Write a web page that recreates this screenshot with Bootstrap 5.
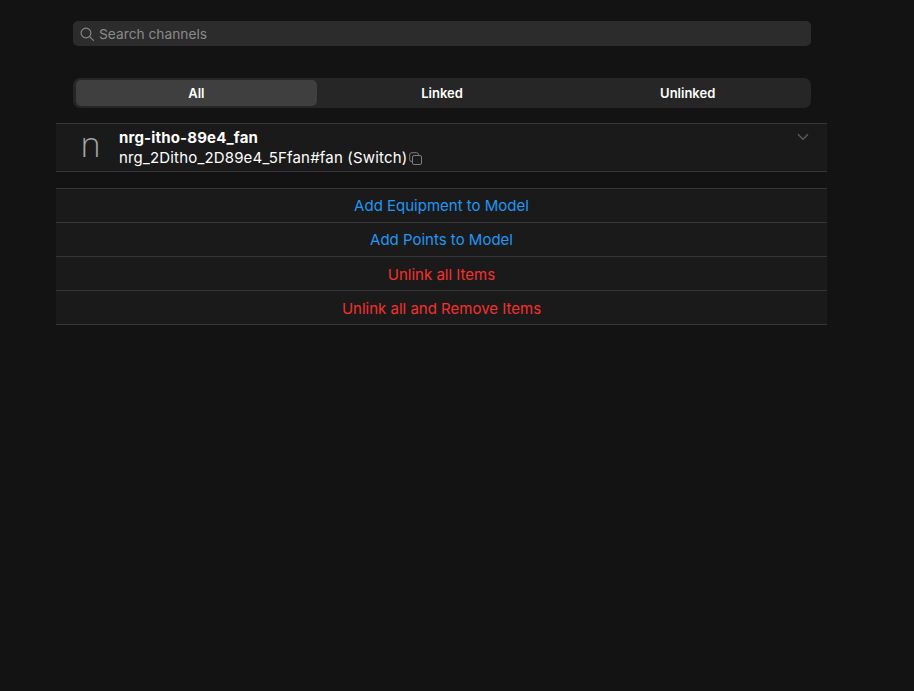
<!DOCTYPE html>
<html lang="en">
<head>
<meta charset="utf-8">
<title>Channels</title>
<link href="https://cdn.jsdelivr.net/npm/bootstrap@5.3.0/dist/css/bootstrap.min.css" rel="stylesheet">
<style>
html,body{height:100%}
body{background:#131313;color:#fff;font-family:Inter,"Liberation Sans",sans-serif;font-size:14px;margin:0}
.page-wrap{width:771px;margin-left:56px;padding-top:21px}
.inset-block{padding:0 16px 0 17px}
.search-box{height:25px;background:#2c2c2c;border-radius:5px;padding-left:7px;color:#8a8a8a;font-size:13.75px;gap:5px}
.search-box span{padding-top:1px}
.seg-box{height:30px;background:#262626;border-radius:7px;margin-top:32px;padding:2px 3px;gap:5px}
.seg-item{flex:1 1 0;font-size:13px;font-weight:600;border-radius:5px;display:flex;align-items:center;justify-content:center;color:#fff;height:26px;padding:1px 0 0}
.seg-item.on{background:#3f3f3f}
.row-list{background:#1a1a1a;border-top:1px solid #363636;border-bottom:1px solid #363636}
.chan-row{margin-top:15px;height:49px;position:relative}
.chan-letter{width:63px;padding-left:6px;text-align:center;font-size:34px;font-weight:300;color:#a5a5a5;line-height:1;padding-top:3px;font-family:"Open Sans",Inter,sans-serif}
.chan-title{font-size:15px;font-weight:700;letter-spacing:.17px;line-height:17px;padding-top:5px}
.chan-sub{font-size:15px;letter-spacing:.17px;line-height:17px;padding-top:3px;white-space:nowrap}
.chev-icon{position:absolute;right:18px;top:9px}
.copy-icon{vertical-align:-2px;margin-left:-3px}
.act-list{margin-top:16px}
.act-row{height:34px;display:flex;align-items:center;justify-content:center;font-size:15px;border-bottom:1px solid #363636;padding-top:2px}
.act-row:last-child{border-bottom:0;height:33px}
.act-blue{color:#2196f3}
.act-red{color:#f5302e;padding-top:4px}
</style>
</head>
<body>
<div class="page-wrap">
  <div class="inset-block">
    <div class="search-box d-flex align-items-center">
      <svg width="14" height="14" viewBox="0 0 14 14" fill="none" stroke="#8a8a8a" stroke-width="1.1"><circle cx="6" cy="6" r="4.9"/><path d="M9.6 9.6 13.4 13.4" stroke-linecap="round"/></svg>
      <span>Search channels</span>
    </div>
    <div class="seg-box d-flex">
      <div class="seg-item on">All</div>
      <div class="seg-item">Linked</div>
      <div class="seg-item">Unlinked</div>
    </div>
  </div>
  <div class="row-list chan-row d-flex">
    <div class="chan-letter">n</div>
    <div>
      <div class="chan-title">nrg-itho-89e4_fan</div>
      <div class="chan-sub">nrg_2Ditho_2D89e4_5Ffan#fan (Switch)
        <svg class="copy-icon" width="13" height="13" viewBox="0 0 13 13" fill="none" stroke="#7d7d7d" stroke-width="1"><rect x="3.5" y="3.5" width="9" height="9" rx="1.5"/><path d="M3.5 9.5h-.5A2 2 0 0 1 .7 7.5V3A2.3 2.3 0 0 1 3 .7h4.5a2 2 0 0 1 2 2v.8"/></svg>
      </div>
    </div>
    <svg class="chev-icon" width="12" height="8" viewBox="0 0 12 8" fill="none" stroke="#5c5c5c" stroke-width="1.4"><path d="M1 1.2 6 6.2 11 1.2"/></svg>
  </div>
  <div class="row-list act-list">
    <div class="act-row act-blue">Add Equipment to Model</div>
    <div class="act-row act-blue">Add Points to Model</div>
    <div class="act-row act-red">Unlink all Items</div>
    <div class="act-row act-red">Unlink all and Remove Items</div>
  </div>
</div>
<script src="https://cdn.jsdelivr.net/npm/bootstrap@5.3.0/dist/js/bootstrap.bundle.min.js"></script>
</body>
</html>
